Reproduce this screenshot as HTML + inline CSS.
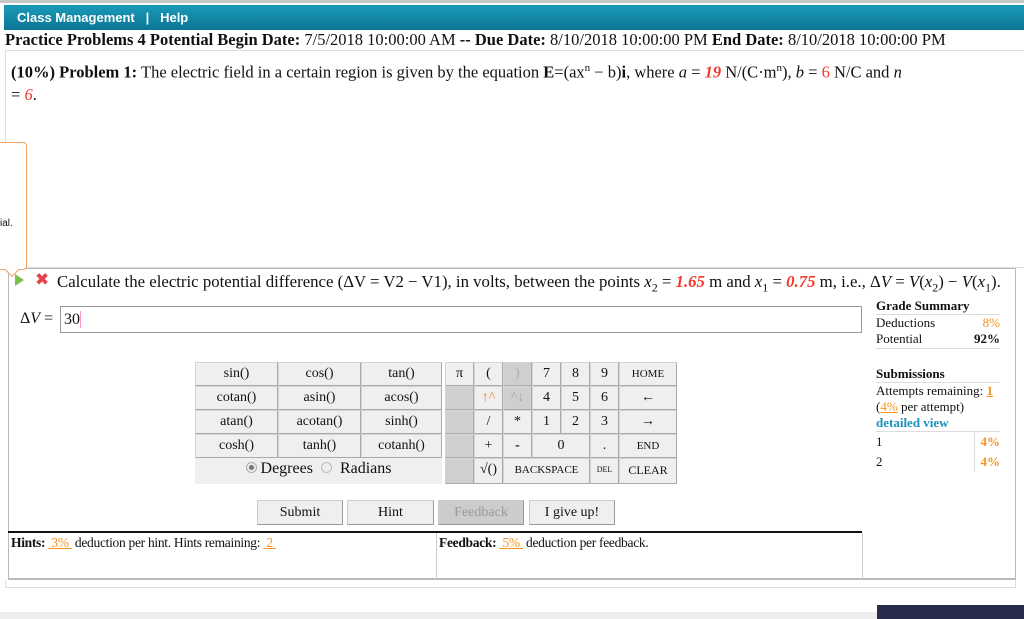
<!DOCTYPE html>
<html><head><meta charset="utf-8"><style>
*{margin:0;padding:0;box-sizing:border-box}
body{width:1024px;height:619px;position:relative;overflow:hidden;background:#fff;font-family:"Liberation Serif",serif;color:#111}
.a{position:absolute}
.or{color:#f7941d}
.rd{color:#f0392b;font-style:italic;font-weight:bold}
.k{position:absolute;background:#efefef;border:1px solid #d4d4d4;border-right-color:#aaa;border-bottom-color:#aaa;font-size:14px;text-align:center;line-height:22px;height:24px}
.kg{background:#cfcfcf;color:#aaa}
.btn{position:absolute;top:500px;height:25px;background:#efefef;border:1px solid #ccc;border-right-color:#999;border-bottom-color:#999;font-size:14px;text-align:center;line-height:23px}
</style></head><body>
<div class="a" style="left:0;top:0;width:1024px;height:3px;background:#c8c8c8"></div>
<div class="a" style="left:4px;top:5px;width:1020px;height:25px;background:linear-gradient(#1a9bb8,#0b7593);color:#fff;font:bold 13px 'Liberation Sans',sans-serif;line-height:25px;padding-left:13px;white-space:pre">Class Management   |   Help</div>
<div class="a" style="left:5px;top:30px;font-size:16.5px;white-space:nowrap"><b>Practice Problems 4 Potential Begin Date:</b> 7/5/2018 10:00:00 AM <b>-- Due Date:</b> 8/10/2018 10:00:00 PM <b>End Date:</b> 8/10/2018 10:00:00 PM</div>
<div class="a" style="left:5px;top:50px;width:1019px;height:218px;border:1px solid #ddd;border-right:none"></div>
<div class="a" style="left:11px;top:57px;width:1000px;font-size:16.5px;line-height:22px"><b>(10%) Problem 1:</b> The electric field in a certain region is given by the equation <b>E</b>=(ax<sup style="font-size:11px">n</sup> − b)<b>i</b>, where <i>a</i> = <span class="rd">19</span> N/(C·m<sup style="font-size:11px">n</sup>), <i>b</i> = <span class="rd" style="font-style:normal;font-weight:normal">6</span> N/C and <i>n</i><br>= <span class="rd" style="font-weight:normal">6</span>.</div>
<div class="a" style="left:8px;top:268px;width:1008px;height:312px;border:1px solid #bbb"></div>
<div class="a" style="left:1016px;top:268px;width:8px;height:345px;background:#fff"></div>
<div class="a" style="left:0;top:142px;width:27px;height:128px;border:1px solid #f5a25a;border-left:none;border-radius:0 4px 4px 0;background:#fff"></div>
<div class="a" style="left:0;top:218px;font:10px 'Liberation Sans',sans-serif">ial.</div>
<div class="a" style="left:7px;top:265px;width:10px;height:10px;background:#fff;border-right:1px solid #f5a25a;border-bottom:1px solid #f5a25a;transform:rotate(45deg)"></div>
<div class="a" style="left:15px;top:274px;width:0;height:0;border-left:9px solid #7cbf4b;border-top:6px solid transparent;border-bottom:6px solid transparent"></div>
<div class="a" style="left:35px;top:270px;color:#e8414a;font:bold 17px 'DejaVu Sans',sans-serif">✖</div>
<div class="a" style="left:57px;top:272px;font-size:16.8px;white-space:nowrap">Calculate the electric potential difference (ΔV = V2 − V1), in volts, between the points <i>x</i><sub style="font-size:12px">2</sub> = <span class="rd">1.65</span> m and <i>x</i><sub style="font-size:12px">1</sub> = <span class="rd">0.75</span> m, i.e., Δ<i>V</i> = <i>V</i>(<i>x</i><sub style="font-size:12px">2</sub>) − <i>V</i>(<i>x</i><sub style="font-size:12px">1</sub>).</div>
<div class="a" style="left:20px;top:310px;font-size:16px">Δ<i>V</i> =</div>
<div class="a" style="left:60px;top:306px;width:802px;height:27px;border:1px solid #999;font-size:16px;padding:4px 3px">30<span style="border-left:1px solid #f9c">&#8203;</span></div>
<div class="a" style="left:876px;top:298px;width:124px;font-size:13px;line-height:16px">
<div style="font-weight:bold;border-bottom:1px solid #ddd">Grade Summary</div>
<div>Deductions<span class="or" style="float:right">8%</span></div>
<div style="border-bottom:1px solid #ddd;padding-bottom:1px">Potential<b style="float:right">92%</b></div>
<div style="font-weight:bold;margin-top:17px;border-bottom:1px solid #ddd">Submissions</div>
<div>Attempts remaining: <u class="or" style="font-weight:bold">1</u></div>
<div>(<u class="or">4%</u> per attempt)</div>
<div style="color:#1b93b8;font-weight:bold;border-bottom:1px solid #ddd">detailed view</div>
<div style="line-height:20px">1<b class="or" style="float:right;border-left:1px solid #ddd;padding-left:6px">4%</b></div>
<div style="line-height:20px">2<b class="or" style="float:right;border-left:1px solid #ddd;padding-left:6px">4%</b></div>
</div>
<div class="a" style="left:195px;top:362px;width:247px;height:122px;background:#efefef"></div>
<div class="k" style="left:195px;top:362px;width:83px">sin()</div>
<div class="k" style="left:278px;top:362px;width:83px">cos()</div>
<div class="k" style="left:361px;top:362px;width:81px">tan()</div>
<div class="k" style="left:195px;top:386px;width:83px">cotan()</div>
<div class="k" style="left:278px;top:386px;width:83px">asin()</div>
<div class="k" style="left:361px;top:386px;width:81px">acos()</div>
<div class="k" style="left:195px;top:410px;width:83px">atan()</div>
<div class="k" style="left:278px;top:410px;width:83px">acotan()</div>
<div class="k" style="left:361px;top:410px;width:81px">sinh()</div>
<div class="k" style="left:195px;top:434px;width:83px">cosh()</div>
<div class="k" style="left:278px;top:434px;width:83px">tanh()</div>
<div class="k" style="left:361px;top:434px;width:81px">cotanh()</div>
<div class="a" style="left:195px;top:460px;width:247px;text-align:center;font-size:16px"><span style="display:inline-block;width:11px;height:11px;border-radius:50%;border:1px solid #aaa;background:radial-gradient(#777 35%,#eee 45%)"></span> Degrees &nbsp;<span style="display:inline-block;width:11px;height:11px;border-radius:50%;border:1px solid #bbb;background:#eee"></span> &nbsp;Radians</div>
<div class="k" style="left:445px;top:362px;width:29px">π</div>
<div class="k kg" style="left:445px;top:386px;width:29px"></div>
<div class="k kg" style="left:445px;top:410px;width:29px"></div>
<div class="k kg" style="left:445px;top:434px;width:29px"></div>
<div class="k kg" style="left:445px;top:458px;width:29px;height:26px"></div>
<div class="k" style="left:474px;top:362px;width:29px">(</div>
<div class="k" style="left:474px;top:386px;width:29px;color:#e58a2b">↑^</div>
<div class="k" style="left:474px;top:410px;width:29px">/</div>
<div class="k" style="left:474px;top:434px;width:29px">+</div>
<div class="k" style="left:474px;top:458px;width:29px;height:26px">√()</div>
<div class="k kg" style="left:503px;top:362px;width:29px">)</div>
<div class="k kg" style="left:503px;top:386px;width:29px">^↓</div>
<div class="k" style="left:503px;top:410px;width:29px">*</div>
<div class="k" style="left:503px;top:434px;width:29px;font-weight:bold">-</div>
<div class="k" style="left:503px;top:458px;width:87px;height:26px;font-size:11px">BACKSPACE</div>
<div class="k" style="left:532px;top:362px;width:29px">7</div>
<div class="k" style="left:561px;top:362px;width:29px">8</div>
<div class="k" style="left:590px;top:362px;width:29px">9</div>
<div class="k" style="left:532px;top:386px;width:29px">4</div>
<div class="k" style="left:561px;top:386px;width:29px">5</div>
<div class="k" style="left:590px;top:386px;width:29px">6</div>
<div class="k" style="left:532px;top:410px;width:29px">1</div>
<div class="k" style="left:561px;top:410px;width:29px">2</div>
<div class="k" style="left:590px;top:410px;width:29px">3</div>
<div class="k" style="left:532px;top:434px;width:58px">0</div>
<div class="k" style="left:590px;top:434px;width:29px">.</div>
<div class="k" style="left:590px;top:458px;width:29px;height:26px;font-size:8px">DEL</div>
<div class="k" style="left:619px;top:362px;width:58px;font-size:11px">HOME</div>
<div class="k" style="left:619px;top:386px;width:58px">←</div>
<div class="k" style="left:619px;top:410px;width:58px">→</div>
<div class="k" style="left:619px;top:434px;width:58px;font-size:11px">END</div>
<div class="k" style="left:619px;top:458px;width:58px;height:26px;font-size:12px">CLEAR</div>
<div class="btn" style="left:257px;width:86px">Submit</div>
<div class="btn" style="left:347px;width:87px">Hint</div>
<div class="btn" style="left:438px;width:86px;background:#ccc;color:#999">Feedback</div>
<div class="btn" style="left:529px;width:86px">I give up!</div>
<div class="a" style="left:8px;top:531px;width:854px;height:2px;background:#111"></div>
<div class="a" style="left:8px;top:533px;width:1008px;height:46px;border:1px solid #bbb;border-top:none"></div>
<div class="a" style="left:436px;top:533px;width:1px;height:46px;background:#ccc"></div>
<div class="a" style="left:862px;top:533px;width:1px;height:46px;background:#ccc"></div>
<div class="a" style="left:11px;top:535px;font-size:13.5px;white-space:nowrap;letter-spacing:-0.3px"><b>Hints:</b> <u class="or">&nbsp;3%&nbsp;</u> deduction per hint. Hints remaining: <u class="or">&nbsp;2&nbsp;</u></div>
<div class="a" style="left:439px;top:535px;font-size:13.5px;white-space:nowrap;letter-spacing:-0.3px"><b>Feedback:</b> <u class="or">&nbsp;5%&nbsp;</u> deduction per feedback.</div>
<div class="a" style="left:5px;top:580px;width:1011px;height:8px;border:1px solid #ddd;border-top:none"></div>
<div class="a" style="left:0;top:612px;width:1024px;height:7px;background:#eee"></div>
<div class="a" style="left:877px;top:605px;width:147px;height:14px;background:#262c4a"></div>
</body></html>
